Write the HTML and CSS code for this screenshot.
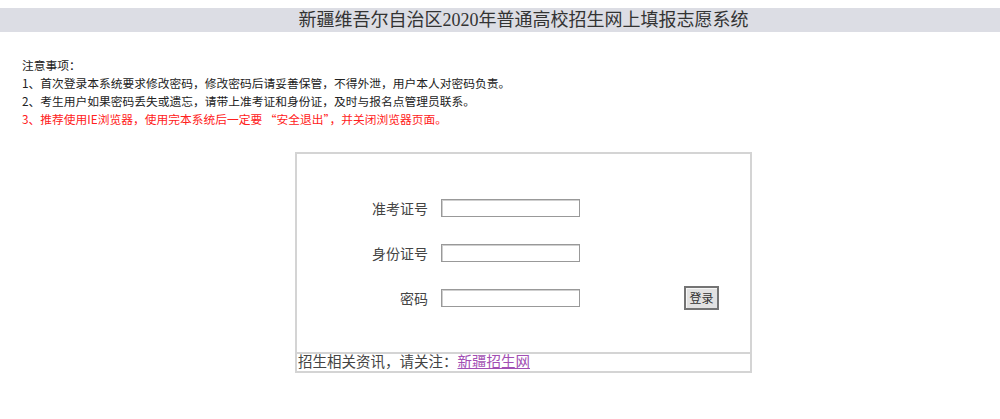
FILE: index.html
```html
<!DOCTYPE html>
<html lang="zh-CN">
<head>
<meta charset="utf-8">
<title>新疆维吾尔自治区2020年普通高校招生网上填报志愿系统</title>
<link rel="stylesheet" href="styles.css">
</head>
<body>
<div class="topbar">新疆维吾尔自治区2020年普通高校招生网上填报志愿系统</div>
<div class="notes">
  <div class="note">注意事项：</div>
  <div class="note">1、首次登录本系统要求修改密码，修改密码后请妥善保管，不得外泄，用户本人对密码负责。</div>
  <div class="note">2、考生用户如果密码丢失或遗忘，请带上准考证和身份证，及时与报名点管理员联系。</div>
  <div class="note warn">3、推荐使用IE浏览器，使用完本系统后一定要 “安全退出”，并关闭浏览器页面。</div>
</div>
<div class="wrap">
  <div class="box">
    <form class="form">
      <div class="row"><label class="label">准考证号</label><input class="field" type="text"></div>
      <div class="row"><label class="label">身份证号</label><input class="field" type="text"></div>
      <div class="row"><label class="label">密码</label><input class="field" type="password"><button class="btn" type="button">登录</button></div>
    </form>
    <div class="foot">招生相关资讯，请关注：<a class="link" href="#">新疆招生网</a></div>
  </div>
</div>
</body>
</html>
```

FILE: styles.css
```css
html, body {
  margin: 0;
  padding: 0;
  background: #ffffff;
}
body {
  font-family: "Noto Sans CJK SC", sans-serif;
}
.topbar {
  margin-top: 8px;
  height: 24px;
  line-height: 24px;
  background: #dcdde4;
  padding-left: 47px;
  text-align: center;
  font-family: "Liberation Serif", "Noto Sans CJK SC", serif;
  font-size: 18px;
  color: #333;
}
.notes {
  margin-top: 24px;
  padding-left: 22px;
  font-size: 11.75px;
  line-height: 18px;
  color: #222;
}
.warn {
  color: #ff2020;
}
.wrap {
  margin-top: 24px;
  padding-left: 47px;
}
.box {
  width: 457px;
  margin: 0 auto;
  border: 2px solid #d4d4d4;
  box-sizing: border-box;
}
.form {
  margin: 0;
  padding: 31px 0 32px;
}
.row {
  display: flex;
  align-items: center;
  height: 45px;
}
.label {
  width: 131px;
  margin-right: 13px;
  text-align: right;
  font-family: "Liberation Serif", "Noto Sans CJK SC", serif;
  font-size: 14px;
  color: #444;
}
.field {
  width: 139px;
  height: 18px;
  box-sizing: border-box;
  margin: 0;
  padding: 0 2px;
  border: 1px solid #999;
  box-shadow: inset 1px 1px 0 #cfcfcf;
  background: #fff;
}
.btn {
  margin-left: 104px;
  width: 35px;
  height: 24px;
  padding: 0;
  border: 2px solid #747474;
  background: #e2e2e2;
  box-shadow: inset 1px 1px 0 #f6f6f6;
  font-family: "Noto Sans CJK SC", sans-serif;
  font-size: 12px;
  color: #333;
}
.foot {
  border-top: 2px solid #d4d4d4;
  height: 17px;
  line-height: 17px;
  padding-left: 1px;
  font-family: "Liberation Serif", "Noto Sans CJK SC", serif;
  font-size: 14.5px;
  color: #444;
  white-space: nowrap;
}
.link {
  color: #a24fb3;
  text-decoration: underline;
}
```
